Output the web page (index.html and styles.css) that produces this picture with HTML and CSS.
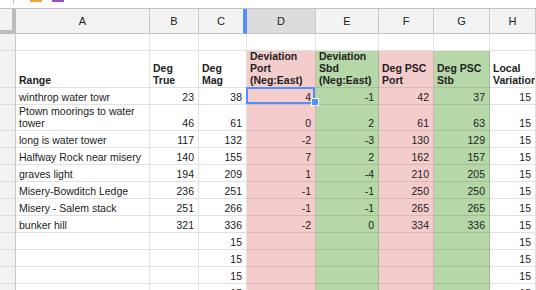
FILE: index.html
```html
<!DOCTYPE html>
<html lang="en">
<head>
    <meta charset="UTF-8">
    <title>Deviation sheet</title>
    <link rel="stylesheet" href="styles.css">
</head>
<body>
    <div class="toolbar">
        <span class="tb-sep"></span>
        <span class="tb-icon orange"></span>
        <span class="tb-icon purple"></span>
    </div>

    <div class="sheet">
        <div class="row col-head">
            <div class="cell corner"></div>
            <div class="cell">A</div>
            <div class="cell">B</div>
            <div class="cell mark">C</div>
            <div class="cell active">D</div>
            <div class="cell">E</div>
            <div class="cell">F</div>
            <div class="cell">G</div>
            <div class="cell">H</div>
            <div class="cell"></div>
        </div>

        <div class="row">
            <div class="cell rn"></div>
            <div class="cell"></div><div class="cell"></div><div class="cell"></div>
            <div class="cell"></div><div class="cell"></div><div class="cell"></div>
            <div class="cell"></div><div class="cell"></div><div class="cell"></div>
        </div>

        <div class="row tall head">
            <div class="cell rn"></div>
            <div class="cell">Range</div>
            <div class="cell">Deg<br>True</div>
            <div class="cell">Deg<br>Mag</div>
            <div class="cell pink">Deviation<br>Port<br>(Neg:East)</div>
            <div class="cell green">Deviation<br>Sbd<br>(Neg:East)</div>
            <div class="cell pink">Deg PSC<br>Port</div>
            <div class="cell green">Deg PSC<br>Stb</div>
            <div class="cell">Local<br>Variation</div>
            <div class="cell"></div>
        </div>

        <div class="row">
            <div class="cell rn"></div>
            <div class="cell">winthrop water towr</div>
            <div class="cell num">23</div>
            <div class="cell num">38</div>
            <div class="cell num pink selected">4</div>
            <div class="cell num green">-1</div>
            <div class="cell num pink">42</div>
            <div class="cell num green">37</div>
            <div class="cell num">15</div>
            <div class="cell"></div>
        </div>

        <div class="row double">
            <div class="cell rn"></div>
            <div class="cell wrap">Ptown moorings to water tower</div>
            <div class="cell num">46</div>
            <div class="cell num">61</div>
            <div class="cell num pink">0</div>
            <div class="cell num green">2</div>
            <div class="cell num pink">61</div>
            <div class="cell num green">63</div>
            <div class="cell num">15</div>
            <div class="cell"></div>
        </div>

        <div class="row">
            <div class="cell rn"></div>
            <div class="cell">long is water tower</div>
            <div class="cell num">117</div>
            <div class="cell num">132</div>
            <div class="cell num pink">-2</div>
            <div class="cell num green">-3</div>
            <div class="cell num pink">130</div>
            <div class="cell num green">129</div>
            <div class="cell num">15</div>
            <div class="cell"></div>
        </div>

        <div class="row">
            <div class="cell rn"></div>
            <div class="cell">Halfway Rock near misery</div>
            <div class="cell num">140</div>
            <div class="cell num">155</div>
            <div class="cell num pink">7</div>
            <div class="cell num green">2</div>
            <div class="cell num pink">162</div>
            <div class="cell num green">157</div>
            <div class="cell num">15</div>
            <div class="cell"></div>
        </div>

        <div class="row">
            <div class="cell rn"></div>
            <div class="cell">graves light</div>
            <div class="cell num">194</div>
            <div class="cell num">209</div>
            <div class="cell num pink">1</div>
            <div class="cell num green">-4</div>
            <div class="cell num pink">210</div>
            <div class="cell num green">205</div>
            <div class="cell num">15</div>
            <div class="cell"></div>
        </div>

        <div class="row">
            <div class="cell rn"></div>
            <div class="cell">Misery-Bowditch Ledge</div>
            <div class="cell num">236</div>
            <div class="cell num">251</div>
            <div class="cell num pink">-1</div>
            <div class="cell num green">-1</div>
            <div class="cell num pink">250</div>
            <div class="cell num green">250</div>
            <div class="cell num">15</div>
            <div class="cell"></div>
        </div>

        <div class="row">
            <div class="cell rn"></div>
            <div class="cell">Misery - Salem stack</div>
            <div class="cell num">251</div>
            <div class="cell num">266</div>
            <div class="cell num pink">-1</div>
            <div class="cell num green">-1</div>
            <div class="cell num pink">265</div>
            <div class="cell num green">265</div>
            <div class="cell num">15</div>
            <div class="cell"></div>
        </div>

        <div class="row">
            <div class="cell rn"></div>
            <div class="cell">bunker hill</div>
            <div class="cell num">321</div>
            <div class="cell num">336</div>
            <div class="cell num pink">-2</div>
            <div class="cell num green">0</div>
            <div class="cell num pink">334</div>
            <div class="cell num green">336</div>
            <div class="cell num">15</div>
            <div class="cell"></div>
        </div>

        <div class="row">
            <div class="cell rn"></div>
            <div class="cell"></div><div class="cell"></div>
            <div class="cell num">15</div>
            <div class="cell pink"></div><div class="cell green"></div>
            <div class="cell pink"></div><div class="cell green"></div>
            <div class="cell num">15</div>
            <div class="cell"></div>
        </div>

        <div class="row">
            <div class="cell rn"></div>
            <div class="cell"></div><div class="cell"></div>
            <div class="cell num">15</div>
            <div class="cell pink"></div><div class="cell green"></div>
            <div class="cell pink"></div><div class="cell green"></div>
            <div class="cell num">15</div>
            <div class="cell"></div>
        </div>

        <div class="row">
            <div class="cell rn"></div>
            <div class="cell"></div><div class="cell"></div>
            <div class="cell num">15</div>
            <div class="cell pink"></div><div class="cell green"></div>
            <div class="cell pink"></div><div class="cell green"></div>
            <div class="cell num">15</div>
            <div class="cell"></div>
        </div>

        <div class="row">
            <div class="cell rn"></div>
            <div class="cell"></div><div class="cell"></div>
            <div class="cell num">15</div>
            <div class="cell pink"></div><div class="cell green"></div>
            <div class="cell pink"></div><div class="cell green"></div>
            <div class="cell num">15</div>
            <div class="cell"></div>
        </div>
    </div>
</body>
</html>
```

FILE: styles.css
```css
body {
    margin: 0;
    background: #fff;
    font-family: 'Liberation Sans', Arial, sans-serif;
    color: #222;
    overflow: hidden;
}
.toolbar {
    height: 8px;
    display: flex;
    align-items: flex-start;
}
.tb-sep {
    width: 1px;
    height: 5px;
    margin-left: 13px;
    background: #c8c8c8;
}
.tb-icon {
    height: 2px;
    width: 12px;
}
.tb-icon.orange {
    margin-left: 16px;
    background: #f4a23a;
}
.tb-icon.purple {
    margin-left: 10px;
    background: #9c4ec0;
}
.sheet {
    border-top: 1px solid #c4c4c4;
}
.row {
    display: grid;
    grid-template-columns: 16px 134px 49px 48px 69px 63px 55px 56px 46px 1fr;
    height: 17px;
}
.row.tall {
    height: 37px;
}
.row.double {
    height: 26px;
}
.cell {
    box-sizing: border-box;
    border-right: 1px solid #e2e2e2;
    border-bottom: 1px solid #e2e2e2;
    font-size: 10.5px;
    line-height: 12px;
    padding: 0 3px 1px 3px;
    display: flex;
    align-items: flex-end;
    white-space: nowrap;
    overflow: hidden;
}
.cell.num {
    justify-content: flex-end;
    padding-right: 4px;
}
.cell.wrap {
    white-space: normal;
}
.rn {
    background: #f3f3f3;
    border-right-color: #c8c8c8;
    border-bottom-color: #dcdcdc;
}
.pink {
    background: #f4cccc;
    border-bottom-color: #dbb7b7;
    border-right-color: #cfb4b4;
}
.green {
    background: #b6d7a8;
    border-bottom-color: #a3c197;
    border-right-color: #a0b996;
}
.head .cell {
    font-weight: bold;
    white-space: nowrap;
}

/* column letters */
.col-head {
    height: 25px;
}
.col-head .cell {
    background: #f3f3f3;
    border-right-color: #c8c8c8;
    border-bottom-color: #c4c4c4;
    justify-content: center;
    align-items: center;
    font-size: 11px;
    padding: 0;
}
.col-head .cell.active {
    background: #dcdcdc;
}
.col-head .cell.mark {
    border-right: 4px solid #4d90fe;
}
.col-head .cell.corner {
    border-right: 4px solid #bdbdbd;
    border-bottom: 4px solid #bdbdbd;
}

/* active cell */
.selected {
    position: relative;
    overflow: visible;
}
.selected::before {
    content: "";
    position: absolute;
    top: -1px;
    left: -1px;
    right: 0;
    bottom: 0;
    border: 2px solid #4d90fe;
}
.selected::after {
    content: "";
    position: absolute;
    right: -4px;
    bottom: -2px;
    width: 6px;
    height: 6px;
    background: #4d90fe;
    border: 1px solid #fff;
    z-index: 1;
}
```
